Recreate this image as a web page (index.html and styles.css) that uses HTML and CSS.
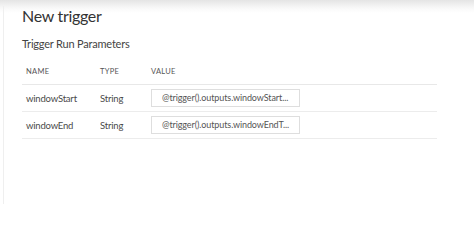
FILE: index.html
```html
<!DOCTYPE html>
<html>
<head>
<meta charset="utf-8">
<link rel="stylesheet" href="styles.css">
</head>
<body>
<div class="frame">
  <div class="panel">
    <h1 class="title">New trigger</h1>
    <h2 class="subtitle">Trigger Run Parameters</h2>
    <div class="params">
      <div class="row head">
        <div class="cell name">Name</div>
        <div class="cell type">Type</div>
        <div class="cell value">Value</div>
      </div>
      <div class="row">
        <div class="cell name">windowStart</div>
        <div class="cell type">String</div>
        <div class="cell value"><div class="input">@trigger().outputs.windowStart...</div></div>
      </div>
      <div class="row">
        <div class="cell name">windowEnd</div>
        <div class="cell type">String</div>
        <div class="cell value"><div class="input">@trigger().outputs.windowEndT...</div></div>
      </div>
    </div>
  </div>
</div>
</body>
</html>
```
FILE: styles.css
```css
html, body {
  margin: 0;
  padding: 0;
  background: #ffffff;
}
body {
  font-family: "Lato", "Open Sans", sans-serif;
  color: #333333;
  width: 474px;
  height: 204px;
  overflow: hidden;
  background: linear-gradient(to bottom, #e4e4e4 0px, #f1f1f1 5px, #fafafa 9px, #ffffff 13px);
}
.frame {
  margin-left: 3px;
  border-left: 1px solid #efefef;
  height: 204px;
  box-sizing: border-box;
  padding-left: 18px;
}
.panel {
  width: 415px;
}
.title {
  margin: 6px 0 0 0;
  font-size: 16px;
  line-height: 20px;
  letter-spacing: -0.3px;
  font-weight: 400;
  color: #333333;
}
.subtitle {
  margin: 11px 0 0 0;
  font-size: 11px;
  line-height: 14px;
  letter-spacing: -0.2px;
  font-weight: 400;
  color: #444444;
}
.params {
  margin-top: 10px;
}
.row {
  display: grid;
  grid-template-columns: 74px 55px 1fr;
  align-items: center;
  height: 26px;
  border-bottom: 1px solid #ececec;
  font-size: 9.5px;
  letter-spacing: -0.2px;
  color: #4a4a4a;
}
.row.head {
  height: 23px;
  align-items: end;
  border-bottom: 1px solid #e8e8e8;
}
.head .cell {
  font-size: 7.5px;
  line-height: 10px;
  text-transform: uppercase;
  letter-spacing: 0.3px;
  color: #555555;
  padding-bottom: 7px;
}
.cell.name, .cell.type {
  padding-left: 4px;
}
.cell.value {
  padding-left: 0;
}
.input {
  width: 149px;
  height: 18px;
  box-sizing: border-box;
  border: 1px solid #dedede;
  font-size: 9px;
  line-height: 16px;
  letter-spacing: -0.1px;
  padding-left: 10px;
  color: #555555;
  white-space: nowrap;
  overflow: hidden;
}
```
